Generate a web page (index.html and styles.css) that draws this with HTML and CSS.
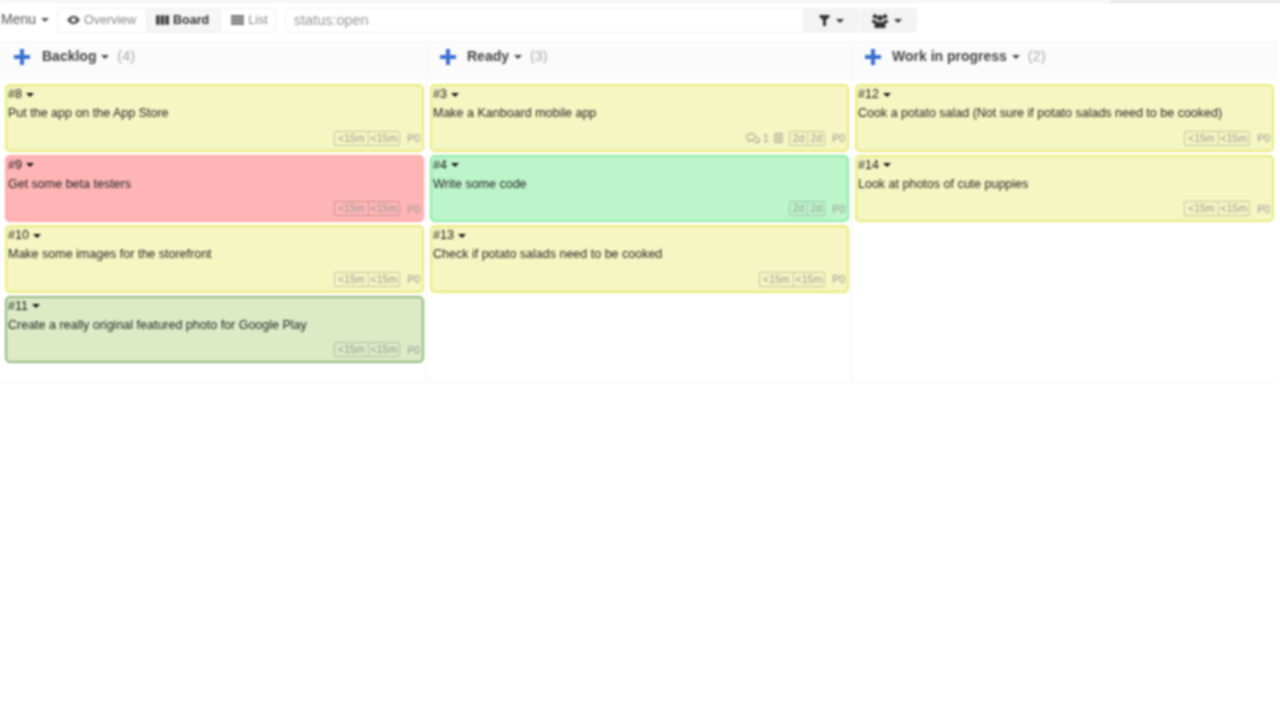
FILE: index.html
```html
<!DOCTYPE html>
<html lang="en">
<head>
  <meta charset="UTF-8">
  <title>Kanboard</title>
  <link rel="stylesheet" href="styles.css">
</head>
<body>
<div class="page">
  <div class="topline"><div class="topline-end"></div></div>
  <div class="toolbar">
    <span class="menu">Menu <i class="caret"></i></span>
    <div class="views">
      <a class="view">
        <svg class="icon" viewBox="0 0 14 10"><path d="M0 5C2.5 1.5 4.8 .5 7 .5s4.500 1 7 4.500C11.500 8.500 9.200 9.500 7 9.500S2.500 8.500 0 5z" fill="#555"/><circle cx="7" cy="5" r="2.300" fill="#fff"/></svg>
        Overview
      </a>
      <a class="view active">
        <svg class="icon" viewBox="0 0 14 10"><path d="M0 0h4v10H0zM5 0h4v10H5zM10 0h4v10h-4z" fill="#444"/></svg>
        Board
      </a>
      <a class="view">
        <svg class="icon" viewBox="0 0 14 10"><path d="M0 0h14v2.500H0zM0 3.700h14v2.600H0zM0 7.500h14V10H0z" fill="#666"/></svg>
        List
      </a>
    </div>
    <div class="search">
      <div class="search-input">status:open</div>
      <a class="search-btn">
        <svg class="icon-filter" viewBox="0 0 10 11"><path d="M0 0h10v2L6.500 5v6h-3V5L0 2z" fill="#333"/></svg>
        <i class="caret"></i>
      </a>
      <a class="search-btn last">
        <svg class="icon-users" viewBox="0 0 16 14"><circle cx="3" cy="2.500" r="2.300" fill="#333"/><circle cx="13" cy="2.500" r="2.300" fill="#333"/><circle cx="8" cy="4" r="2.800" fill="#333"/><path d="M0 6h3.500L5 8h6l1.500-2H16v3h-2.500v5h-11V9H0z" fill="#333"/></svg>
        <i class="caret"></i>
      </a>
    </div>
  </div>

  <div class="board">
    <section class="column">
      <header class="column-head">
        <svg class="plus" viewBox="0 0 16 16"><path d="M6 0h4v6h6v4h-6v6H6v-6H0V6h6z"/></svg>
        <span class="column-title">Backlog <i class="caret"></i></span>
        <span class="column-count">(4)</span>
      </header>
      <div class="cards">
        <article class="card yellow">
          <div class="card-id">#8 <i class="caret"></i></div>
          <div class="card-title">Put the app on the App Store</div>
          <div class="card-foot"><span class="times"><span>&lt;15m</span><span>&lt;15m</span></span><span class="priority">P0</span></div>
        </article>
        <article class="card red">
          <div class="card-id">#9 <i class="caret"></i></div>
          <div class="card-title">Get some beta testers</div>
          <div class="card-foot"><span class="times"><span>&lt;15m</span><span>&lt;15m</span></span><span class="priority">P0</span></div>
        </article>
        <article class="card yellow">
          <div class="card-id">#10 <i class="caret"></i></div>
          <div class="card-title">Make some images for the storefront</div>
          <div class="card-foot"><span class="times"><span>&lt;15m</span><span>&lt;15m</span></span><span class="priority">P0</span></div>
        </article>
        <article class="card green">
          <div class="card-id">#11 <i class="caret"></i></div>
          <div class="card-title">Create a really original featured photo for Google Play</div>
          <div class="card-foot"><span class="times"><span>&lt;15m</span><span>&lt;15m</span></span><span class="priority">P0</span></div>
        </article>
      </div>
    </section>

    <section class="column">
      <header class="column-head">
        <svg class="plus" viewBox="0 0 16 16"><path d="M6 0h4v6h6v4h-6v6H6v-6H0V6h6z"/></svg>
        <span class="column-title">Ready <i class="caret"></i></span>
        <span class="column-count">(3)</span>
      </header>
      <div class="cards">
        <article class="card yellow">
          <div class="card-id">#3 <i class="caret"></i></div>
          <div class="card-title">Make a Kanboard mobile app</div>
          <div class="card-foot">
            <svg class="icon-comment" viewBox="0 0 14 10"><path d="M.5 4C.5 2 2.500.8 5 .8S9.500 2 9.500 4 7.500 7 5 7L2.500 8.500V6.700C1.200 6.200.5 5.200.5 4zM11 4.500c1.500.5 2.500 1.500 2.500 2.500 0 .8-.5 1.400-1 1.700V10L10.500 9C9 9 8 8.500 7.500 8" fill="none" stroke="#888"/></svg>
            <span class="count">1</span>
            <svg class="icon-doc" viewBox="0 0 8 10"><path d="M.5.500h7v9h-7zM2 3h4M2 5h4M2 7h4" fill="none" stroke="#999"/></svg>
            <span class="times"><span>2d</span><span>2d</span></span><span class="priority">P0</span>
          </div>
        </article>
        <article class="card mint">
          <div class="card-id">#4 <i class="caret"></i></div>
          <div class="card-title">Write some code</div>
          <div class="card-foot"><span class="times"><span>2d</span><span>2d</span></span><span class="priority">P0</span></div>
        </article>
        <article class="card yellow">
          <div class="card-id">#13 <i class="caret"></i></div>
          <div class="card-title">Check if potato salads need to be cooked</div>
          <div class="card-foot"><span class="times"><span>&lt;15m</span><span>&lt;15m</span></span><span class="priority">P0</span></div>
        </article>
      </div>
    </section>

    <section class="column">
      <header class="column-head">
        <svg class="plus" viewBox="0 0 16 16"><path d="M6 0h4v6h6v4h-6v6H6v-6H0V6h6z"/></svg>
        <span class="column-title">Work in progress <i class="caret"></i></span>
        <span class="column-count">(2)</span>
      </header>
      <div class="cards">
        <article class="card yellow">
          <div class="card-id">#12 <i class="caret"></i></div>
          <div class="card-title">Cook a potato salad (Not sure if potato salads need to be cooked)</div>
          <div class="card-foot"><span class="times"><span>&lt;15m</span><span>&lt;15m</span></span><span class="priority">P0</span></div>
        </article>
        <article class="card yellow">
          <div class="card-id">#14 <i class="caret"></i></div>
          <div class="card-title">Look at photos of cute puppies</div>
          <div class="card-foot"><span class="times"><span>&lt;15m</span><span>&lt;15m</span></span><span class="priority">P0</span></div>
        </article>
      </div>
    </section>
  </div>
</div>
</body>
</html>
```

FILE: styles.css
```css
body {
  margin: 0;
  font-family: "Liberation Sans", Arial, sans-serif;
  font-size: 12.5px;
  color: #333;
  background: #fff;
  overflow: hidden;
}
/* the whole screen is soft, like an upscaled capture */
.page {
  height: 720px;
  background: #fff;
  filter: blur(0.9px);
}
.caret {
  display: inline-block;
  width: 0;
  height: 0;
  margin-left: 1px;
  vertical-align: middle;
  border-top: 4px solid currentColor;
  border-left: 4px solid transparent;
  border-right: 4px solid transparent;
}
.topline {
  height: 3px;
  background: #f5f5f5;
  display: flex;
  justify-content: flex-end;
}
.topline-end {
  width: 170px;
  background: #e4e4e4;
}

/* toolbar */
.toolbar {
  display: flex;
  align-items: center;
  height: 25px;
  margin-top: 5px;
}
.menu {
  font-size: 14px;
  color: #555;
  width: 57px;
  padding: 0 0 3px 1px;
  box-sizing: border-box;
  white-space: nowrap;
}
.views {
  display: flex;
  height: 25px;
  border: 1px solid #eee;
  border-radius: 4px;
  box-sizing: border-box;
  color: #888;
}
.view {
  display: flex;
  align-items: center;
  gap: 4px;
  padding: 0 10px 2px 9px;
}
.view.active {
  background: #f6f6f6;
  color: #333;
  font-weight: bold;
  border-left: 1px solid #eee;
  border-right: 1px solid #eee;
  padding-right: 11px;
}
.view:last-child {
  padding: 0 7px 2px 10px;
}
.icon {
  width: 13px;
  height: 10px;
}
.search {
  display: flex;
  height: 25px;
  width: 632px;
  margin-left: 9px;
}
.search-input {
  flex: 1;
  box-sizing: border-box;
  border: 1px solid #f0f0f0;
  border-right: 0;
  border-radius: 4px 0 0 4px;
  padding: 4px 8px;
  font-size: 14.500px;
  color: #999;
  line-height: 15px;
}
.search-btn {
  display: flex;
  align-items: center;
  justify-content: center;
  gap: 5px;
  width: 56px;
  padding-left: 2px;
  box-sizing: border-box;
  background: #f3f3f3;
  color: #333;
}
.search-btn.last {
  width: 57px;
  padding: 0 2px 0 0;
  margin-left: 1px;
  border-radius: 0 4px 4px 0;
}
.icon-filter {
  width: 11px;
  height: 11px;
}
.icon-users {
  width: 16px;
  height: 14px;
}

/* board */
.board {
  display: grid;
  grid-template-columns: 426px 424px 426px;
  gap: 1px;
  width: 1278px;
  margin-top: 8px;
  background: #f4f4f4;
  border-bottom: 1px solid #f4f4f4;
  border-top: 1px solid #f4f4f4;
}
.column {
  background: #fff;
  height: 339px;
}
.column-head {
  display: flex;
  align-items: center;
  height: 36px;
  padding: 0 0 8px 13px;
  background: #fbfbfb;
  border-bottom: 1px solid #f6f6f6;
  box-sizing: border-box;
}
.column:first-child .column-head {
  padding-left: 14px;
}
.plus {
  width: 16px;
  height: 16px;
  fill: #3a6fd0;
  margin: 2px 11px 0 0;
}
.column:first-child .plus {
  margin-right: 12px;
}
.column-title {
  font-size: 14px;
  font-weight: bold;
  color: #444;
  margin-right: 8px;
}
.column-count {
  font-size: 14.500px;
  color: #aaa;
}
.cards {
  display: flex;
  flex-direction: column;
  gap: 3px;
  padding: 6px 2px 0 3px;
}
.column:first-child .cards {
  padding-left: 5px;
}
.column:last-child .cards {
  padding-right: 4px;
}
.card {
  height: 67.600px;
  box-sizing: border-box;
  border: 2px solid;
  border-radius: 5px;
  padding: 1px 2px 0 1px;
  display: flex;
  flex-direction: column;
  color: #333;
}
.card.yellow { background: #f5f6c2; border-color: #e9ea78; }
.card.red { background: #ffb5b6; border-color: #ffa8a8; }
.card.mint { background: #bdf5cb; border-color: #8aeca2; }
.card.green { background: #dcebc6; border-color: #93b87f; }
.card-id {
  line-height: 15px;
  color: #111;
}
.card-title {
  margin-top: 4px;
  line-height: 15px;
  color: #222;
}
.card-foot {
  margin-top: auto;
  margin-bottom: 4px;
  display: flex;
  justify-content: flex-end;
  align-items: center;
  color: #999;
  font-size: 10.500px;
}
.times {
  display: flex;
  border: 1px solid rgba(0, 0, 0, 0.2);
  border-radius: 2px;
  line-height: 13px;
}
.times span {
  padding: 0 3px;
}
.times span + span {
  border-left: 1px solid rgba(0, 0, 0, 0.2);
  padding: 0 2px;
}
.priority {
  margin-left: 7px;
}
.icon-comment {
  width: 14px;
  height: 10px;
}
.count {
  margin: 0 5px 0 3px;
}
.icon-doc {
  width: 9px;
  height: 10px;
  margin-right: 6px;
}
```
